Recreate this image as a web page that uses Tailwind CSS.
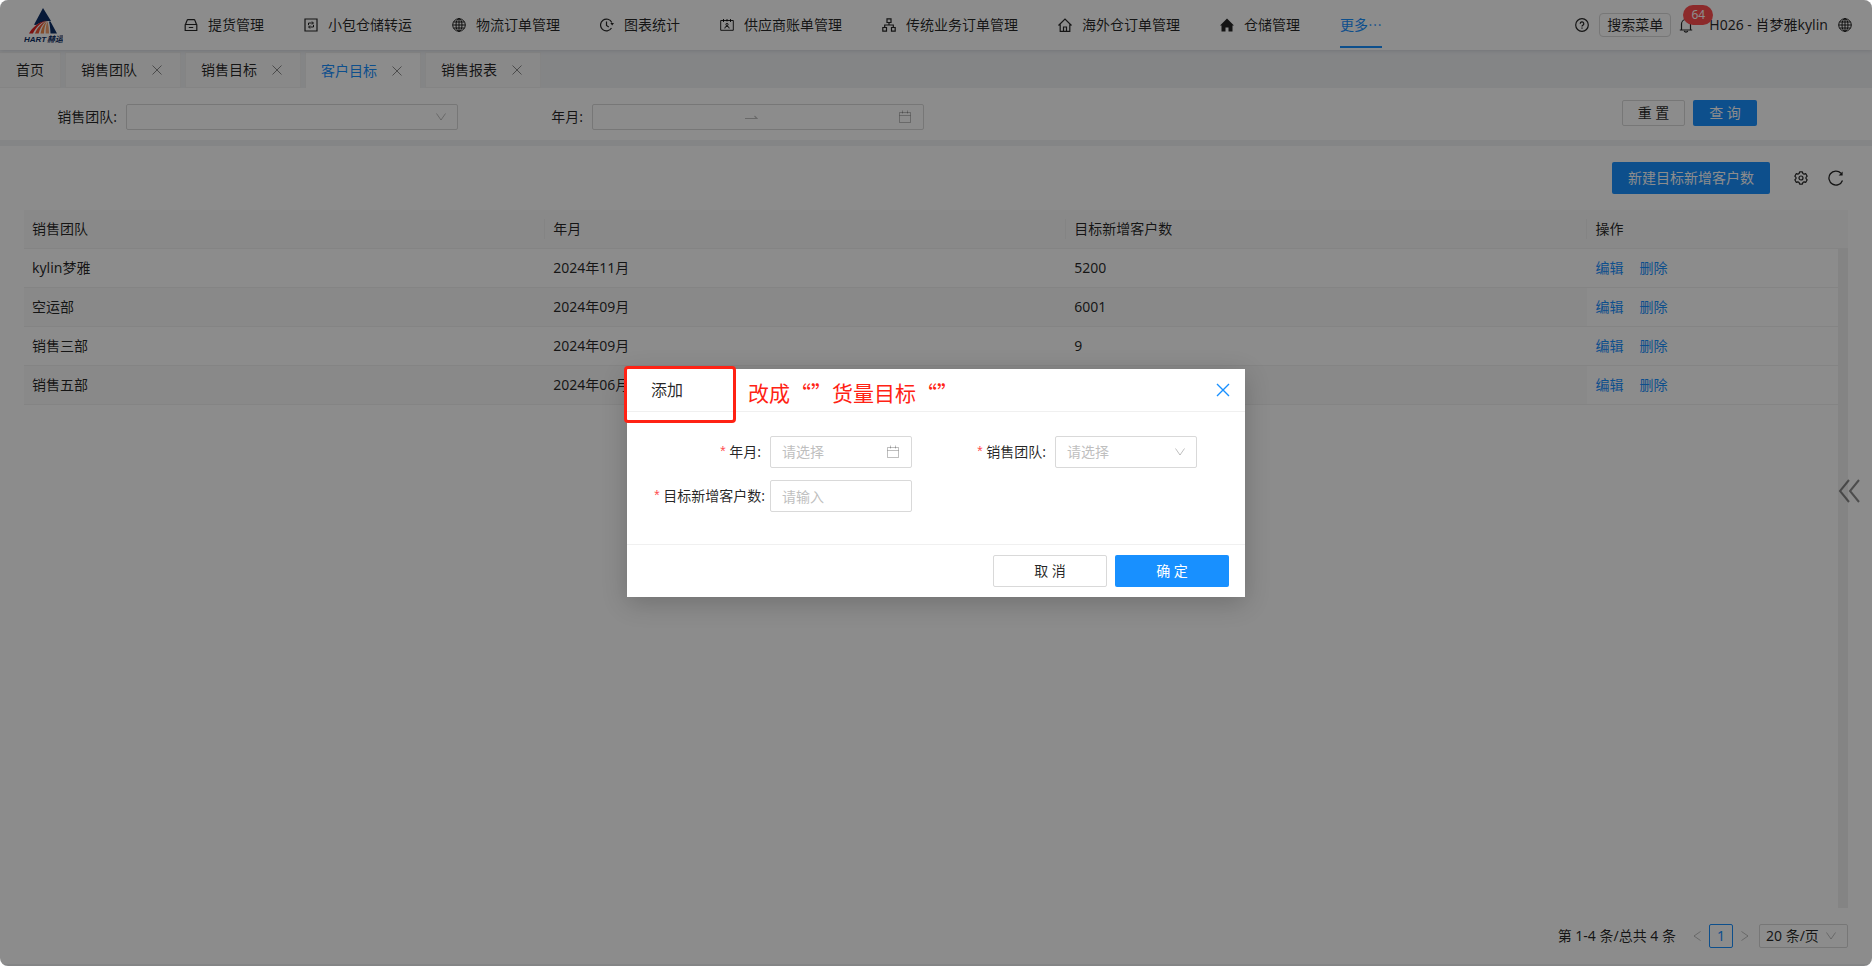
<!DOCTYPE html>
<html lang="zh-CN">
<head>
    <meta charset="UTF-8">
    <meta name="viewport" content="width=device-width, initial-scale=1.0">
    <title>客户目标</title>
    <script src="https://cdn.jsdelivr.net/npm/@tailwindcss/browser@4"></script>
</head>
<body class="bg-white font-['Noto_Sans','Noto_Sans_CJK_SC',sans-serif] text-sm text-black/85">
    <!-- Icon sprite -->
    <svg class="hidden">
        <symbol id="i-close" viewBox="0 0 12 12" fill="none" stroke="currentColor"><path d="M1.5 1.5l9 9M10.5 1.5l-9 9"/></symbol>
        <symbol id="i-down" viewBox="0 0 12 12" fill="none" stroke="currentColor"><path d="M1.5 2.5L6 9l4.500-6.500"/></symbol>
        <symbol id="i-calendar" viewBox="0 0 14 14" fill="none" stroke="currentColor"><path d="M1.500 2.500h11v10h-11zM1.500 5.500h11M4.500 .5v3M9.500 .5v3"/></symbol>
        <symbol id="i-globe" viewBox="0 0 14 14" fill="none" stroke="currentColor"><circle cx="7" cy="7" r="6.300"/><ellipse cx="7" cy="7" rx="3" ry="6.300"/><path d="M7 .7v12.600M.7 7h12.600M1.500 4h11M1.500 10h11"/></symbol>
    </svg>

    <div class="relative flex min-h-screen flex-col overflow-hidden rounded-lg bg-[#f0f2f5]">
        <header class="relative flex h-[50px] shrink-0 items-center bg-white pl-6 pr-5 shadow-[0_1px_4px_rgba(0,21,41,0.12)]">
            <a href="#" aria-label="HART" class="mr-[121px] block shrink-0">
                <svg width="39" height="36" viewBox="0 0 39 36">
                    <path d="M19 1l8 13c-5-.5-10 .8-15 4l-2-.2z" fill="#0d2f66"/>
                    <path d="M25 14.500h1.500L33 26.500h-6.500c-.2-4-.5-8-1.500-12z" fill="#0d2f66"/>
                    <path d="M5 26.500C8 21 13 16 22 13.200 15 17 11 21.500 9 26.500z" fill="#e02020"/>
                    <path d="M11 26.500C13 21.500 16.500 17 22.500 13.500 18.500 17.500 15.500 22 14.700 26.500z" fill="#ee5533"/>
                    <path d="M16.500 26.500C17.500 21.500 19.500 17 23 14 21 18 20 22 20 26.500z" fill="#f08a4c"/>
                    <path d="M21.700 26.500C21.500 21.500 22 17.500 23.500 14.500 24.500 18.500 25 22.500 25 26.500z" fill="#f4a070"/>
                    <text x="0" y="35" font-family="Liberation Sans, sans-serif" font-weight="700" font-style="italic" font-size="8" fill="#0d2f66">HART</text>
                    <text x="23" y="35" font-family="Noto Sans CJK SC, sans-serif" font-weight="700" font-style="italic" font-size="8" fill="#0d2f66">赫运</text>
                </svg>
            </a>
            <nav class="flex h-full items-center gap-10 whitespace-nowrap">
                <a href="#" class="flex items-center gap-2.5">
                    <svg width="14" height="14" viewBox="0 0 14 14" fill="none" stroke="currentColor" stroke-width="1.200"><path d="M1.500 6.500L3 2.500Q3.300 1.600 4 1.600h6q.7 0 1 .9l1.500 4M.8 6.500h12.400M1.200 6.500v6h11.600v-6M4.800 9.500h4.400"/></svg>提货管理
                </a>
                <a href="#" class="flex items-center gap-2.5">
                    <svg width="14" height="14" viewBox="0 0 14 14" fill="none" stroke="currentColor"><path d="M1 1h12v12H1z" stroke-width="1.200"/><path d="M4.500 7.200V5H9M8 3.500L9.500 5 8 6.500M9.500 6.800V9H5M6 7.500L4.500 9 6 10.500"/></svg>小包仓储转运
                </a>
                <a href="#" class="flex items-center gap-2.5">
                    <svg width="14" height="14"><use href="#i-globe"/></svg>物流订单管理
                </a>
                <a href="#" class="flex items-center gap-2.5">
                    <svg width="14" height="14" viewBox="0 0 14 14" fill="none" stroke="currentColor" stroke-width="1.200"><path d="M11.500 10A5.900 5.900 0 1 1 11.800 4.500M6.500 3.500v4l2.300 1.500"/><path d="M10.300 5h3.700l-1.800 2.500z" fill="currentColor" stroke="none"/></svg>图表统计
                </a>
                <a href="#" class="flex items-center gap-2.5">
                    <svg width="14" height="14" viewBox="0 0 14 14" fill="none" stroke="currentColor"><path d="M.7 2.500h12.600v9.800H.7zM3.500 1v3M7 1v2.500M10.500 1v3"/><circle cx="7" cy="6.500" r="1.100"/><path d="M4.800 10.500a2.200 2.200 0 0 1 4.400 0"/></svg>供应商账单管理
                </a>
                <a href="#" class="flex items-center gap-2.5">
                    <svg width="14" height="14" viewBox="0 0 14 14" fill="none" stroke="currentColor" stroke-width="1.200"><path d="M5 .8h4v3.700H5zM.8 9.500h3.700v3.700H.8zM9.500 9.500h3.700v3.700H9.500zM7 4.500V7M2.700 9.500V7h8.600v2.500"/></svg>传统业务订单管理
                </a>
                <a href="#" class="flex items-center gap-2.5">
                    <svg width="14" height="14" viewBox="0 0 14 14" fill="none" stroke="currentColor" stroke-width="1.200"><path d="M.5 7.500L7 1l6.500 6.500M2.200 6.500v6.800h9.600V6.500M5.500 13V9h3v4"/></svg>海外仓订单管理
                </a>
                <a href="#" class="flex items-center gap-2.5">
                    <svg width="14" height="14" viewBox="0 0 14 14" fill="currentColor"><path d="M7 .5l7 7h-1.500v6h-4V9.500h-3v4h-4v-6H0z"/></svg>仓储管理
                </a>
                <a href="#" class="flex h-full items-end pb-0.5 text-[#1890ff]">
                    <span class="flex h-[46px] items-center border-b-2 border-[#1890ff] font-['Noto_Sans_CJK_SC',sans-serif]">更多…</span>
                </a>
            </nav>
            <div class="ml-auto flex shrink-0 items-center whitespace-nowrap">
                <button type="button" aria-label="帮助" class="mr-[10px]">
                    <svg width="14" height="14" viewBox="0 0 14 14" fill="none" stroke="currentColor" stroke-width="1.200"><circle cx="7" cy="7" r="6.300"/><path d="M5.200 5.800A1.800 1.800 0 1 1 7.700 7.400Q7 7.700 7 8.500M7 9.500v1.200"/></svg>
                </button>
                <button type="button" class="mr-2 h-6 rounded border border-[#d9d9d9] px-[7px] leading-5">搜索菜单</button>
                <button type="button" aria-label="通知" class="relative mr-4">
                    <svg width="14" height="16" viewBox="0 0 14 16" fill="none" stroke="currentColor" stroke-width="1.200"><path d="M.8 13h12.400M2.500 13V7a4.500 4.500 0 0 1 9 0v6M5.200 14a2 2 0 0 0 3.600 0M7 2.500V1"/></svg>
                    <span class="absolute -top-3 left-1 h-5 w-[30px] rounded-full bg-[#ff4d4f] text-center text-xs leading-5 text-white">64</span>
                </button>
                <span class="mr-[10px]">H026 - 肖梦雅kylin</span>
                <button type="button" aria-label="语言"><svg width="14" height="14"><use href="#i-globe"/></svg></button>
            </div>
        </header>

        <div class="flex h-[38px] shrink-0 items-end gap-1 whitespace-nowrap">
            <a href="#" class="flex h-9 items-center border border-l-0 border-[#f0f0f0] bg-[#fafafa] px-4">首页</a>
            <div class="flex h-9 items-center gap-3.5 border border-[#f0f0f0] bg-[#fafafa] pl-[15px] pr-[17px]"><a href="#">销售团队</a><button type="button" aria-label="关闭" class="text-black/45"><svg width="12" height="12"><use href="#i-close"/></svg></button></div>
            <div class="flex h-9 items-center gap-3.5 border border-[#f0f0f0] bg-[#fafafa] pl-[15px] pr-[17px]"><a href="#">销售目标</a><button type="button" aria-label="关闭" class="text-black/45"><svg width="12" height="12"><use href="#i-close"/></svg></button></div>
            <div class="flex h-9 items-center gap-3.5 border border-b-0 border-[#f0f0f0] bg-white pl-[15px] pr-[17px]"><a href="#" class="text-[#1890ff]">客户目标</a><button type="button" aria-label="关闭" class="text-black/45"><svg width="12" height="12"><use href="#i-close"/></svg></button></div>
            <div class="flex h-9 items-center gap-3.5 border border-[#f0f0f0] bg-[#fafafa] pl-[15px] pr-[17px]"><a href="#">销售报表</a><button type="button" aria-label="关闭" class="text-black/45"><svg width="12" height="12"><use href="#i-close"/></svg></button></div>
        </div>

        <form class="grid h-[52px] shrink-0 grid-cols-4 bg-white pr-2 pt-3">
            <div class="mt-1 flex h-[26px] items-center pr-2">
                <label for="team" class="w-[126px] pr-[9px] text-right">销售团队:</label>
                <div class="relative flex h-full flex-1">
                    <select id="team" class="w-full appearance-none rounded-xs border border-[#d9d9d9] bg-white px-3"><option></option></select>
                    <svg width="12" height="12" class="pointer-events-none absolute right-[11px] top-[7px] text-black/25"><use href="#i-down"/></svg>
                </div>
            </div>
            <div class="mt-1 flex h-[26px] items-center pr-2">
                <label for="start" class="w-[126px] pr-[9px] text-right">年月:</label>
                <div class="flex h-full flex-1 items-center rounded-xs border border-[#d9d9d9] px-[11px] text-black/25">
                    <input id="start" class="w-0 flex-1 outline-none">
                    <svg width="14" height="14" viewBox="0 0 14 14" fill="none" stroke="currentColor" stroke-width="1.200"><path d="M1 8.500h12L10.500 6"/></svg>
                    <input aria-label="结束年月" class="w-0 flex-1 outline-none">
                    <svg width="14" height="14"><use href="#i-calendar"/></svg>
                </div>
            </div>
            <div class="col-start-4 flex items-start gap-2 pl-56">
                <button type="reset" class="h-[26px] w-[63px] rounded-xs border border-[#d9d9d9] bg-white">重 置</button>
                <button type="button" class="h-[26px] w-16 rounded-xs bg-[#1890ff] text-white">查 询</button>
            </div>
        </form>

        <main class="relative mb-0.5 mt-1.5 flex flex-1 flex-col bg-white px-6 pb-4 pt-4">
            <div class="mb-4 flex h-8 items-center justify-end">
                <button type="button" class="h-8 rounded-xs bg-[#1890ff] px-4 text-white">新建目标新增客户数</button>
                <button type="button" aria-label="设置" class="ml-6">
                    <svg width="14" height="14" viewBox="0 0 14 14" fill="none" stroke="currentColor" stroke-width="1.200" stroke-linejoin="round"><path d="M5.600.8h2.800l.5 1.700 1.200.7 1.700-.5 1.400 2.500L12 6.400v1.200l1.200 1.200-1.400 2.500-1.700-.5-1.200.7-.5 1.700H5.600l-.5-1.700-1.200-.7-1.700.5L.8 8.800 2 7.600V6.400L.8 5.200l1.400-2.500 1.700.5 1.200-.7z"/><circle cx="7" cy="7" r="2"/></svg>
                </button>
                <button type="button" aria-label="刷新" class="ml-5 mr-1">
                    <svg width="16" height="16" viewBox="0 0 16 16" fill="none" stroke="currentColor" stroke-width="1.300"><path d="M14.500 10.500A7 7 0 1 1 13 3.200"/><path d="M14.600 1.500v4h-4z" fill="currentColor" stroke="none"/></svg>
                </button>
            </div>

            <div class="relative flex-1">
                <table class="w-full table-fixed border-collapse text-left">
                    <colgroup><col class="w-2/7"><col class="w-2/7"><col class="w-2/7"><col></colgroup>
                    <thead class="bg-[#fafafa]">
                        <tr class="h-[38px] border-b border-[#f0f0f0]">
                            <th class="p-0 font-normal"><div class="border-r border-[#f0f0f0] px-2">销售团队</div></th>
                            <th class="p-0 font-normal"><div class="border-r border-[#f0f0f0] px-2">年月</div></th>
                            <th class="p-0 font-normal"><div class="border-r border-[#f0f0f0] px-2">目标新增客户数</div></th>
                            <th class="px-2 font-normal">操作</th>
                        </tr>
                    </thead>
                    <tbody id="rows"></tbody>
                </table>
                <div class="absolute bottom-0 right-0 top-[38px] w-2.5 bg-[#f1f1f1]"></div>
            </div>

            <div class="mt-4 flex h-6 items-center justify-end">
                <span class="mr-[15px]">第 1-4 条/总共 4 条</span>
                <button type="button" aria-label="上一页" class="text-black/25"><svg width="12" height="12" class="rotate-90"><use href="#i-down"/></svg></button>
                <button type="button" class="mx-1.5 h-6 w-6 rounded-xs border border-[#1890ff] leading-5 text-[#1890ff]">1</button>
                <button type="button" aria-label="下一页" class="text-black/25"><svg width="12" height="12" class="-rotate-90"><use href="#i-down"/></svg></button>
                <div class="relative ml-2">
                    <select aria-label="每页条数" class="h-6 w-[89px] appearance-none rounded-xs border border-[#d9d9d9] bg-white pl-1.5 leading-5"><option>20 条/页</option></select>
                    <svg width="12" height="12" class="pointer-events-none absolute right-[11px] top-1.5 text-black/25"><use href="#i-down"/></svg>
                </div>
            </div>
            <button type="button" aria-label="展开" class="absolute right-3 top-[333px] text-black/45">
                <svg width="22" height="24" viewBox="0 0 22 24" fill="none" stroke="currentColor" stroke-width="2"><path d="M11 1L2 12l9 11M21 1l-9 11 9 11"/></svg>
            </button>
        </main>

        <!-- Modal -->
        <div class="absolute inset-0 flex items-center justify-center bg-black/45">
            <div role="dialog" aria-labelledby="dialogTitle" class="relative w-[618px] bg-white shadow-[0_6px_24px_rgba(0,0,0,0.2)]">
                <div class="flex h-[43px] items-center justify-between border-b border-[#f0f0f0] pl-6 pr-[15px]">
                    <h2 id="dialogTitle" class="text-base">添加</h2>
                    <button type="button" aria-label="关闭" class="text-[#1890ff]"><svg width="14" height="14" viewBox="0 0 14 14" fill="none" stroke="currentColor" stroke-width="1.400"><path d="M1 1l12 12M13 1L1 13"/></svg></button>
                </div>
                <form class="grid grid-cols-2 gap-y-3 px-6 pb-8 pt-6">
                    <div class="flex h-8 items-center">
                        <label for="month" class="w-[119px] whitespace-nowrap pr-[9px] text-right"><span class="mr-0.5 font-['Liberation_Mono',monospace] text-[#ff4d4f]">*</span>年月:</label>
                        <div class="flex h-8 w-[142px] items-center rounded-xs border border-[#d9d9d9] px-[11px] text-black/25">
                            <input id="month" placeholder="请选择" class="w-0 flex-1 outline-none placeholder:text-[#bfbfbf]">
                            <svg width="14" height="14"><use href="#i-calendar"/></svg>
                        </div>
                    </div>
                    <div class="flex h-8 items-center">
                        <label for="dept" class="w-[119px] whitespace-nowrap pr-[9px] text-right"><span class="mr-0.5 font-['Liberation_Mono',monospace] text-[#ff4d4f]">*</span>销售团队:</label>
                        <div class="relative">
                            <select id="dept" class="h-8 w-[142px] appearance-none rounded-xs border border-[#d9d9d9] px-[11px] text-[#bfbfbf]"><option>请选择</option></select>
                            <svg width="12" height="12" class="pointer-events-none absolute right-[11px] top-2.5 text-black/25"><use href="#i-down"/></svg>
                        </div>
                    </div>
                    <div class="flex h-8 items-center">
                        <label for="count" class="w-[119px] whitespace-nowrap pr-[5px] text-right"><span class="mr-0.5 font-['Liberation_Mono',monospace] text-[#ff4d4f]">*</span>目标新增客户数:</label>
                        <input id="count" placeholder="请输入" class="h-8 w-[142px] rounded-xs border border-[#d9d9d9] px-[11px] outline-none placeholder:text-[#bfbfbf]">
                    </div>
                </form>
                <div class="flex justify-end gap-2 border-t border-[#f0f0f0] px-4 py-2.5">
                    <button type="button" class="h-8 w-[114px] rounded-xs border border-[#d9d9d9] bg-white">取 消</button>
                    <button type="button" class="h-8 w-[114px] rounded-xs bg-[#1890ff] text-white">确 定</button>
                </div>

                <!-- Review note -->
                <div class="pointer-events-none absolute -left-[3px] -top-[3px] flex items-start whitespace-nowrap">
                    <div class="h-[57px] w-28 rounded-sm border-3 border-[#ff2214]"></div>
                    <p class="ml-3 mt-[11px] font-['Noto_Sans_CJK_SC',sans-serif] text-[21px] leading-[30px] text-[#ff2214]">改成“”货量目标“”</p>
                </div>
            </div>
        </div>
    </div>

    <script>
        const rows = [
            ['kylin梦雅', '2024年11月', '5200'],
            ['空运部', '2024年09月', '6001'],
            ['销售三部', '2024年09月', '9'],
            ['销售五部', '2024年06月', ''],
        ];

        document.getElementById('rows').innerHTML = rows.map(([team, month, count], i) => {
            const bg = i % 2 ? 'bg-[#fafafa]' : 'bg-white';
            return `
                <tr class="h-[39px] border-b border-[#f0f0f0]">
                    <td class="px-2 ${bg}">${team}</td>
                    <td class="px-2 ${bg}">${month}</td>
                    <td class="px-2 ${bg}">${count}</td>
                    <td class="bg-white px-2 text-[#1890ff]"><a href="#" class="mr-4">编辑</a><a href="#">删除</a></td>
                </tr>`;
        }).join('');
    </script>
</body>
</html>
